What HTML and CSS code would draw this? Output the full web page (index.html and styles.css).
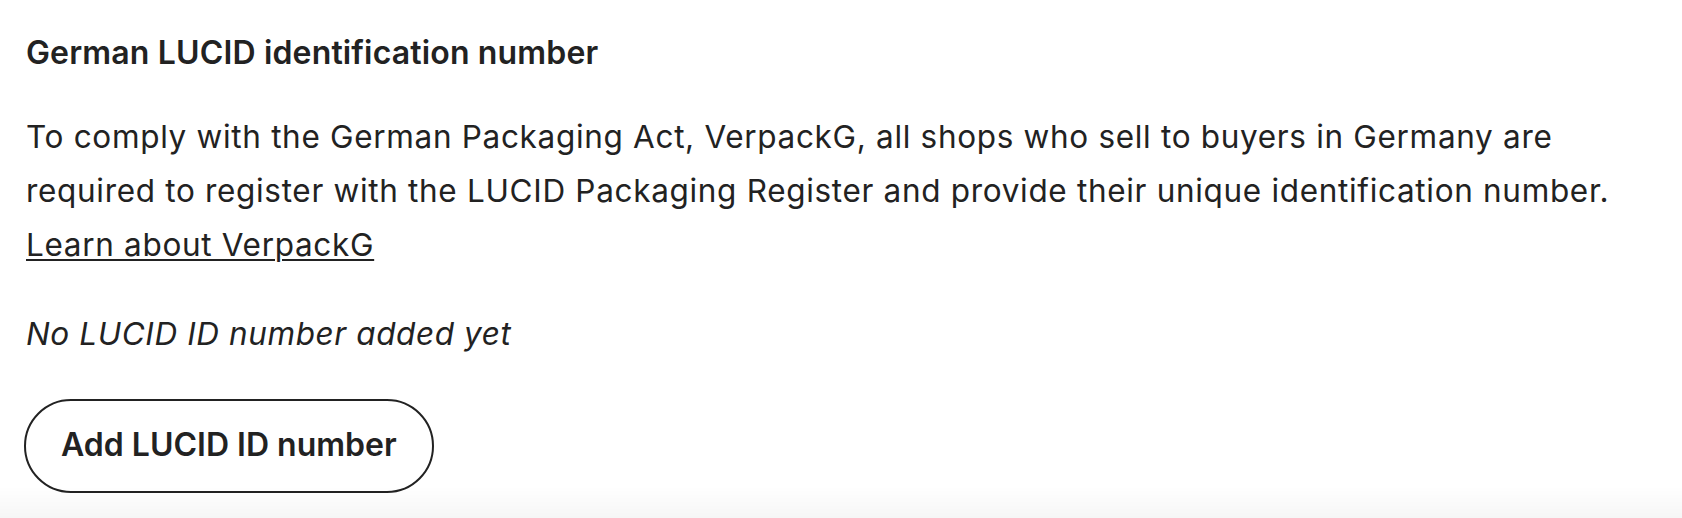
FILE: index.html
```html
<!DOCTYPE html>
<html lang="en">
<head>
    <meta charset="UTF-8">
    <meta name="viewport" content="width=device-width, initial-scale=1.0">
    <title>LUCID identification number</title>
    <link rel="stylesheet" href="styles.css">
</head>
<body>
    <!-- LUCID section -->
    <div class="lucid-section">
        <h2>German LUCID identification number</h2>
        <p class="intro">
            To comply with the German Packaging Act, VerpackG, all shops who sell to buyers in Germany are<br>
            required to register with the LUCID Packaging Register and provide their unique identification number.<br>
            <a href="#">Learn about VerpackG</a>
        </p>
        <p class="empty-note">No LUCID ID number added yet</p>
        <button class="btn-outline">Add LUCID ID number</button>
    </div>

    <div class="bottom-fade"></div>
</body>
</html>
```
FILE: styles.css
```css
/* Reset styles */
* {
    margin: 0;
    padding: 0;
    box-sizing: border-box;
}

body {
    font-family: 'Inter', 'Open Sans', sans-serif;
    background-color: #fff;
    color: #222;
    min-height: 100vh;
}

/* Section */
.lucid-section {
    padding: 33px 20px 0 26px;
}

.lucid-section h2 {
    font-size: 32px;
    font-weight: 600;
    line-height: 40px;
    letter-spacing: 0.15px;
    margin-bottom: 37px;
}

.intro {
    font-size: 31.5px;
    line-height: 54px;
    letter-spacing: 0.68px;
    margin-bottom: 35px;
}

.intro a {
    color: #222;
    text-decoration: underline;
    text-decoration-thickness: 2px;
    text-underline-offset: 3px;
}

.empty-note {
    font-size: 31.5px;
    font-style: italic;
    letter-spacing: 0.6px;
    line-height: 54px;
    margin-bottom: 38px;
}

/* Button */
.btn-outline {
    font-family: inherit;
    font-size: 32px;
    font-weight: 600;
    line-height: 40px;
    color: #222;
    background: #fff;
    border: 2px solid #222;
    border-radius: 48px;
    padding: 24px 35px 26px;
    margin-left: -2px;
    cursor: pointer;
}

/* soft shade under the page bottom */
.bottom-fade {
    position: fixed;
    left: 0;
    right: 0;
    bottom: 0;
    height: 32px;
    background: linear-gradient(rgba(0, 0, 0, 0), rgba(0, 0, 0, 0.035));
    pointer-events: none;
}
```
